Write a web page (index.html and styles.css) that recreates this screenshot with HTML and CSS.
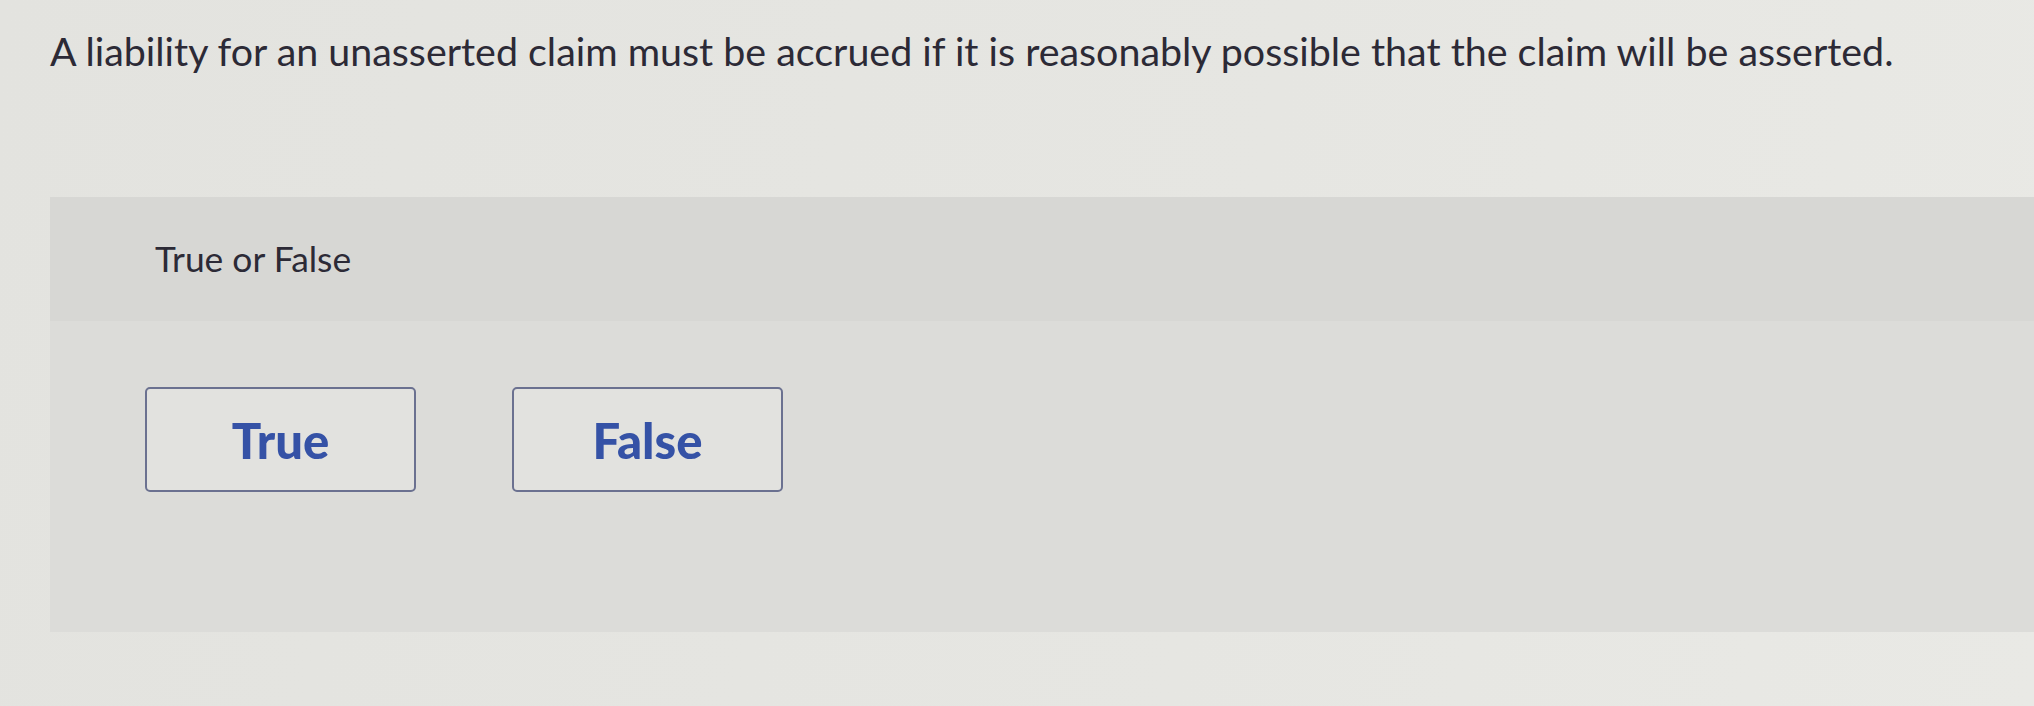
FILE: index.html
```html
<!DOCTYPE html>
<html lang="en">
<head>
  <meta charset="UTF-8">
  <title>True or False</title>
  <link rel="stylesheet" href="styles.css">
</head>
<body>
  <p class="prompt">A liability for an unasserted claim must be accrued if it is reasonably possible that the claim will be asserted.</p>

  <div class="question">
    <div class="question-head">True or False</div>
    <div class="choices">
      <button class="choice">True</button>
      <button class="choice">False</button>
    </div>
  </div>
</body>
</html>
```

FILE: styles.css
```css
body {
  margin: 0;
  font-family: Lato, "Open Sans", sans-serif;
  background: linear-gradient(100deg, #e3e3df 0%, #e6e6e2 60%, #e9e9e5 100%);
  color: #2c2a36;
  height: 706px;
  overflow: hidden;
}

.prompt {
  margin: 0;
  padding: 26px 0 0 50px;
  font-size: 39.4px;
  line-height: 50px;
  white-space: nowrap;
}

.question {
  margin: 121px 0 0 50px;
  background: #dcdcd9;
}

.question-head {
  height: 124px;
  box-sizing: border-box;
  padding: 40px 0 0 105px;
  font-size: 35.4px;
  background: #d7d7d4;
}

.choices {
  display: flex;
  gap: 96px;
  padding: 66px 0 140px 95px;
}

.choice {
  width: 271px;
  height: 105px;
  background: #e2e2df;
  border: 2px solid #6b7190;
  border-radius: 5px;
  font-family: Lato, "Open Sans", sans-serif;
  font-weight: 900;
  font-size: 49px;
  color: #3552a6;
}
```
